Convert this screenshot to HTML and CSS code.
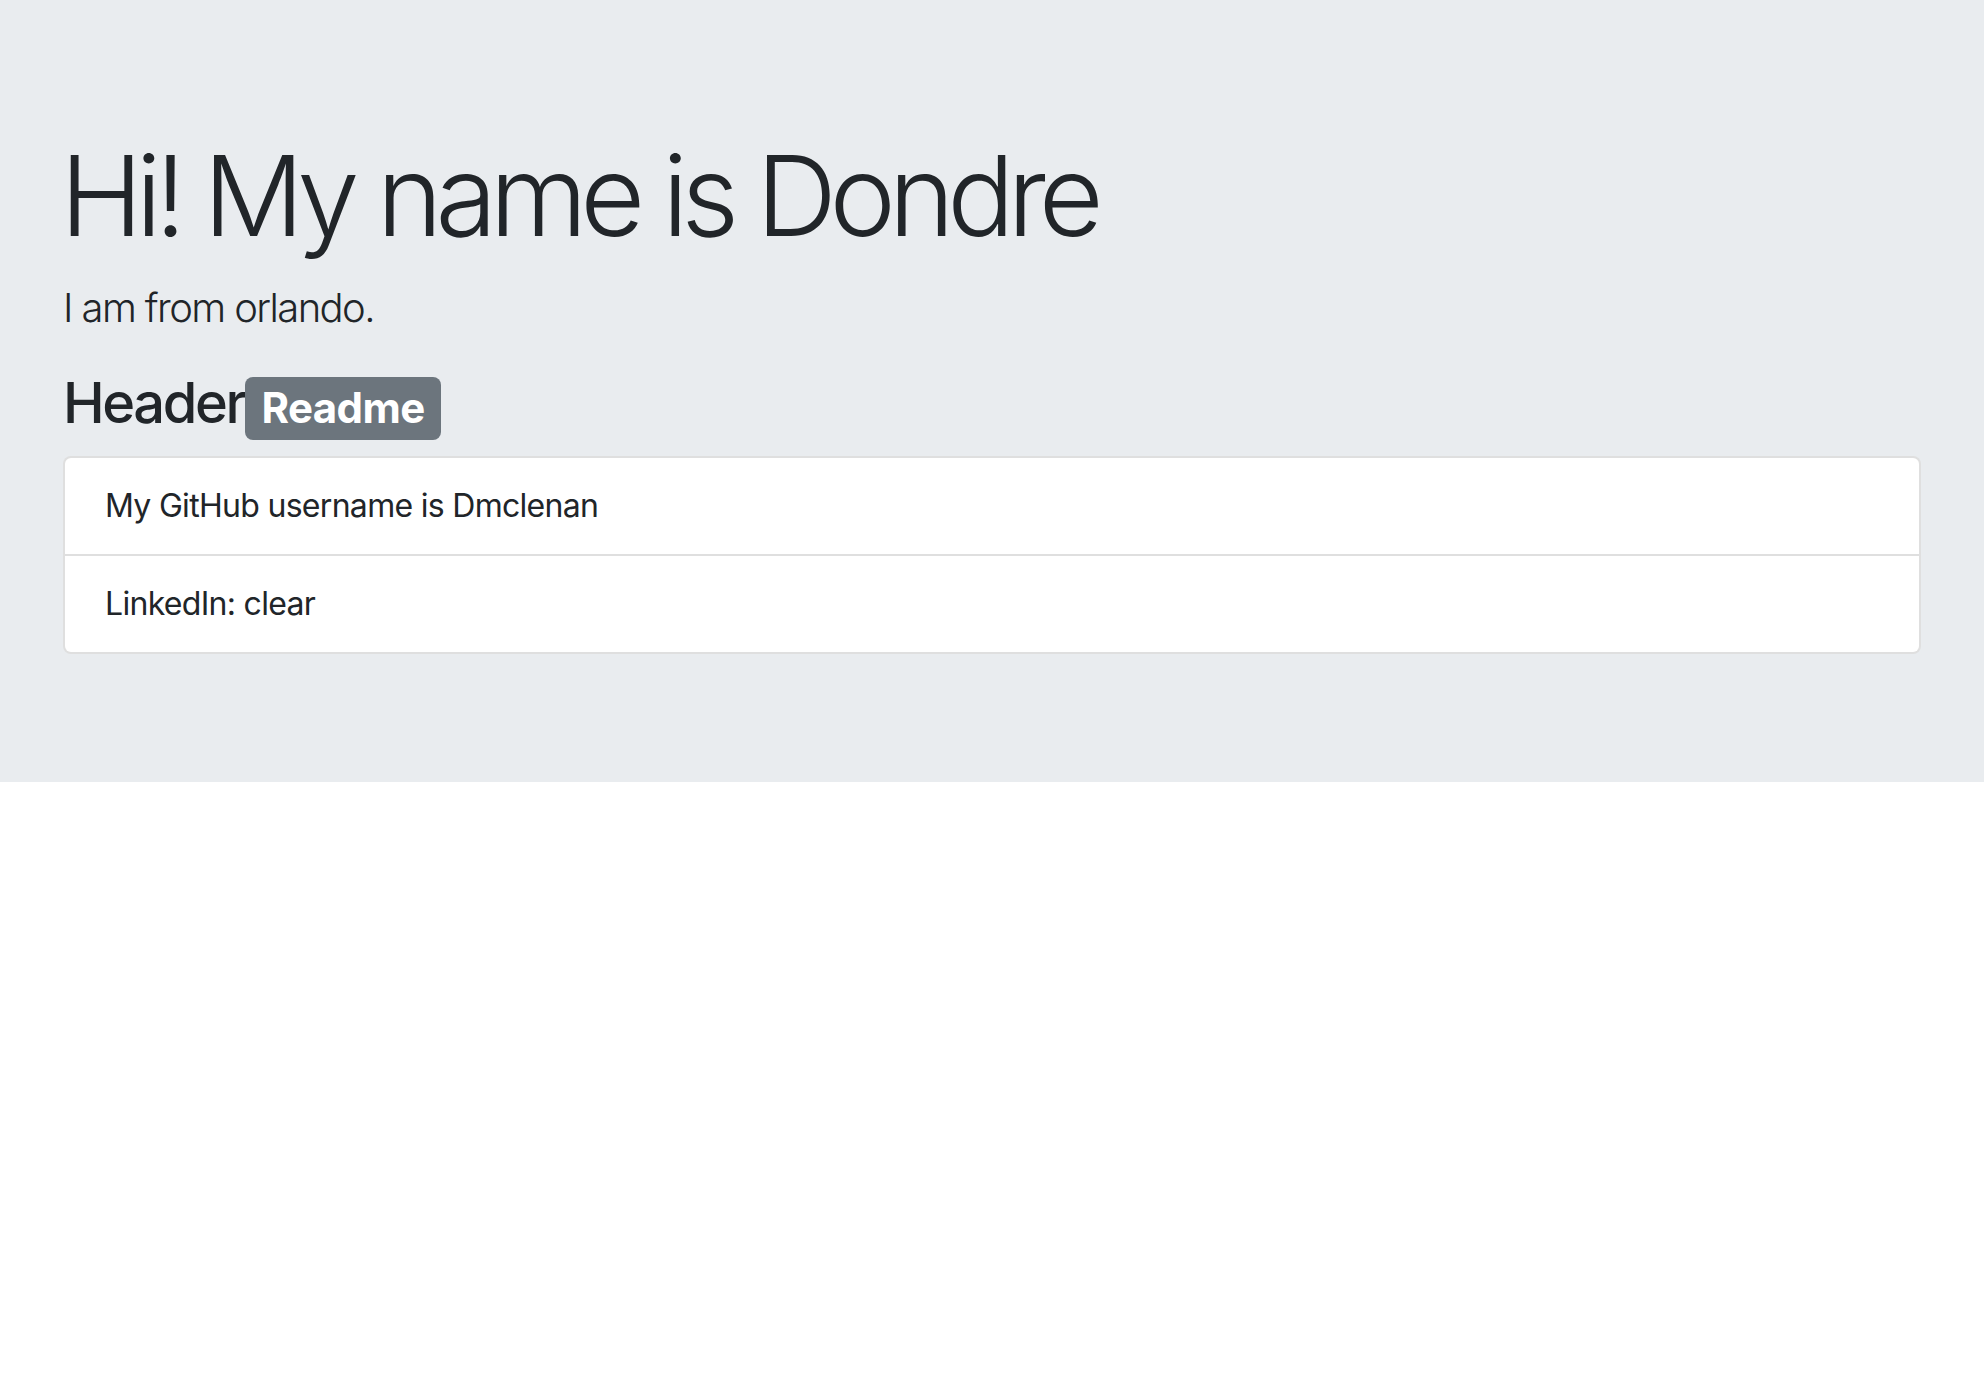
FILE: index.html
```html
<!DOCTYPE html>
<html lang="en">
<head>
  <meta charset="UTF-8">
  <meta name="viewport" content="width=device-width, initial-scale=1.0">
  <title>Readme</title>
  <link rel="stylesheet" href="styles.css">
</head>

<body>
  <div class="jumbotron">
    <div class="container">
      <h1 class="display">Hi! My name is Dondre</h1>
      <p class="lead">I am from orlando.</p>
      <h3 class="section-title">Header<span class="badge">Readme</span></h3>
      <ul class="list-group">
        <li class="list-group-item">My GitHub username is Dmclenan</li>
        <li class="list-group-item">LinkedIn: clear</li>
      </ul>
    </div>
  </div>
</body>
</html>
```

FILE: styles.css
```css
body {
  margin: 0;
  font-family: Inter, "Noto Sans", "Liberation Sans", sans-serif;
  font-size: 32px;
  line-height: 1.5;
  color: #212529;
  background-color: #fff;
}

.jumbotron {
  background-color: #e9ecef;
  padding: 128px 0;
  margin-bottom: 64px;
}

.container {
  margin: 0 auto;
  padding: 0 30px;
  box-sizing: border-box;
  width: 1918px;
}

.display {
  font-size: 112px;
  font-weight: 300;
  line-height: 1.2;
  letter-spacing: -7.2px;
  margin: 0 0 16px -3px;
}

.lead {
  font-size: 40px;
  font-weight: 300;
  letter-spacing: -1.6px;
  margin: 0 0 32px;
}

.section-title {
  font-size: 56px;
  font-weight: 500;
  line-height: 1.2;
  letter-spacing: -2.4px;
  margin: 0 0 16px;
}

.badge {
  display: inline-block;
  font-size: 75%;
  font-weight: 700;
  line-height: 1;
  letter-spacing: -0.6px;
  padding: 0.25em 0.4em;
  border-radius: 8px;
  background-color: #6c757d;
  color: #fff;
  vertical-align: baseline;
}

.list-group {
  list-style: none;
  margin: 0;
  padding: 0;
  border-radius: 8px;
}

.list-group-item {
  background-color: #fff;
  border: 2px solid rgba(0, 0, 0, 0.125);
  padding: 24px 40px;
  letter-spacing: -0.7px;
}

.list-group-item:first-child {
  border-top-left-radius: 8px;
  border-top-right-radius: 8px;
}

.list-group-item + .list-group-item {
  border-top-width: 0;
}

.list-group-item:last-child {
  border-bottom-left-radius: 8px;
  border-bottom-right-radius: 8px;
}
```
